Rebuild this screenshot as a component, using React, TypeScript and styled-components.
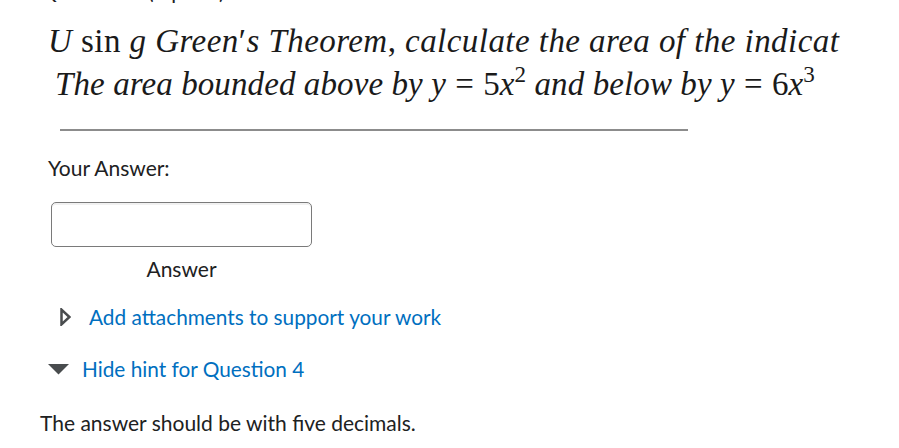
import React from "react";
import styled, { createGlobalStyle } from "styled-components";

const GlobalStyle = createGlobalStyle`
	html, body {
		margin: 0;
		padding: 0;
		background: #ffffff;
	}
	body {
		font-family: Lato, "Noto Sans", sans-serif;
		color: #202122;
		overflow: hidden;
	}
`;

const Page = styled.div`
	width: 899px;
	height: 448px;
	overflow: hidden;
	padding-left: 40px;
	box-sizing: border-box;
`;

// the line above is cut off by the top of the window
const CutLine = styled.div`
	font-size: 21px;
	line-height: 24px;
	margin-top: -21px;
	height: 24px;
	white-space: nowrap;
`;

const MathBlock = styled.div`
	font-family: "Liberation Serif", "Times New Roman", serif;
	font-size: 33px;
	color: #1a1a1a;
	margin-top: 17px;
`;

const MathLine = styled.div<{ $indent: number; $spacing: number }>`
	padding-left: ${(p) => p.$indent}px;
	letter-spacing: ${(p) => p.$spacing}px;
	height: 43px;
	line-height: 43px;
	white-space: nowrap;
`;

const Mi = styled.span`
	font-style: italic;
`;

const Mn = styled.span`
	font-style: normal;
`;

const Rel = styled.span`
	font-style: normal;
	margin: 0 0.28em;
`;

const Sup = styled.sup`
	font-style: normal;
	font-size: 0.7em;
	vertical-align: 0.55em;
	line-height: 0;
`;

const Rule = styled.hr`
	margin: 23px 0 0 20px;
	width: 628px;
	border: none;
	height: 2px;
	background: #8c8c8c;
`;

const Label = styled.div`
	margin: 25px 0 0 8px;
	font-size: 21px;
	line-height: 24px;
`;

const AnswerField = styled.div`
	margin: 22px 0 0 11px;
	width: 261px;
	display: flex;
	flex-direction: column;
	align-items: center;
	gap: 10px;
`;

const Input = styled.input`
	width: 261px;
	height: 45px;
	box-sizing: border-box;
	border: 1px solid #7a7a7a;
	border-radius: 5px;
	background: #ffffff;
	box-shadow: inset 0 2px 0 #f1f1f1;
	outline: none;
`;

const Caption = styled.div`
	font-size: 21px;
	line-height: 24px;
`;

const Toggle = styled.div<{ $indent: number; $top: number; $gap: number }>`
	display: flex;
	align-items: center;
	gap: ${(p) => p.$gap}px;
	margin: ${(p) => p.$top}px 0 0 ${(p) => p.$indent}px;
	height: 24px;
`;

const Link = styled.a`
	color: #006fbf;
	font-size: 20.8px;
	line-height: 24px;
	text-decoration: none;
`;

const Hint = styled.div`
	margin-top: 30px;
	font-size: 21px;
	line-height: 24px;
`;

const ClosedArrow = () => (
	<svg width="11" height="18" viewBox="0 0 11 18">
		<path d="M1.5 1.6 L9.4 9 L1.5 16.4 Z" fill="none" stroke="#494c4e" strokeWidth="2.5" />
	</svg>
);

const OpenArrow = () => (
	<svg width="21" height="11" viewBox="0 0 21 11">
		<path d="M0 0 L21 0 L10.5 10.5 Z" fill="#494c4e" />
	</svg>
);

export default function App() {
	return (
		<>
			<GlobalStyle />
			<Page>
				<CutLine>Question 4 (1 point)</CutLine>
				<MathBlock>
					<MathLine $indent={8} $spacing={0.45}>
						<Mi>U</Mi> <Mn>sin</Mn> <Mi>g Green</Mi>
						<Mn>′</Mn>
						<Mi>s Theorem</Mi>
						<Mn>,</Mn> <Mi>calculate the area of the indicat</Mi>
					</MathLine>
					<MathLine $indent={15} $spacing={0.1}>
						<Mi>The area bounded above by y</Mi>
						<Rel>=</Rel>
						<Mn>5</Mn>
						<Mi>x</Mi>
						<Sup>2</Sup> <Mi>and below by y</Mi>
						<Rel>=</Rel>
						<Mn>6</Mn>
						<Mi>x</Mi>
						<Sup>3</Sup>
					</MathLine>
				</MathBlock>
				<Rule />
				<Label>Your Answer:</Label>
				<AnswerField>
					<Input type="text" aria-label="Answer" />
					<Caption>Answer</Caption>
				</AnswerField>
				<Toggle $indent={20} $top={24} $gap={18}>
					<ClosedArrow />
					<Link href="#">Add attachments to support your work</Link>
				</Toggle>
				<Toggle $indent={8} $top={28} $gap={13}>
					<OpenArrow />
					<Link href="#">Hide hint for Question 4</Link>
				</Toggle>
				<Hint>The answer should be with five decimals.</Hint>
			</Page>
		</>
	);
}
